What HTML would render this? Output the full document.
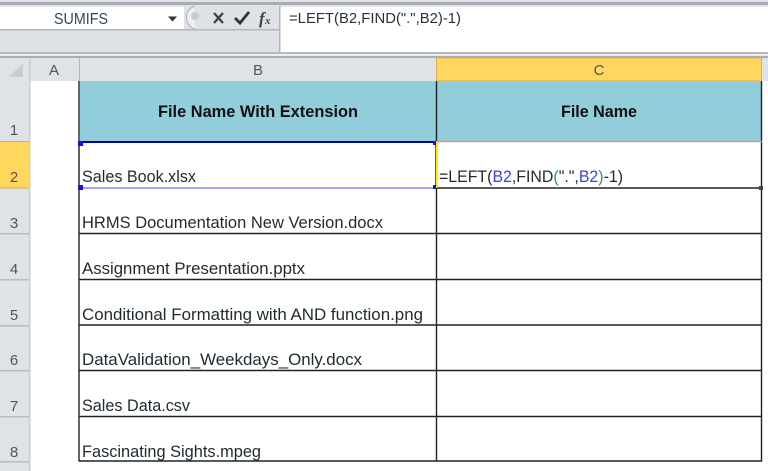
<!DOCTYPE html>
<html><head><meta charset="utf-8"><style>
html,body{margin:0;padding:0;background:#fff;width:768px;height:471px;overflow:hidden}
svg{display:block;font-family:"Liberation Sans",sans-serif;filter:blur(0.35px)}
.t{font-size:17px;fill:#1f2a30}
.h{font-size:16.500px;fill:#111;font-weight:bold}
.r{font-size:15px;fill:#555;text-anchor:middle}
</style></head><body>
<svg width="768" height="471" viewBox="0 0 768 471" xmlns="http://www.w3.org/2000/svg">
<!-- top -->
<rect width="768" height="57" fill="#fff"/>
<rect x="0" y="0" width="768" height="2" fill="#dfe2e6"/>
<rect x="0" y="2" width="768" height="3" fill="#a9adb2"/>
<rect x="0" y="5" width="768" height="2" fill="#e2e4e7"/>
<rect x="0" y="29" width="280" height="23" fill="#dee1e6"/>
<rect x="184" y="6" width="96" height="24" fill="#dee1e6"/>
<path d="M195 6 A12 12 0 0 0 195 29" fill="#eceef0" stroke="#b4b8bc" stroke-width="1.2"/>
<rect x="0" y="29" width="280" height="1.5" fill="#b4b8bd"/>
<rect x="279" y="6" width="1.5" height="46" fill="#b0b4b9"/>
<rect x="0" y="52" width="768" height="2" fill="#b4b8bc"/>
<rect x="0" y="54" width="768" height="3" fill="#eceef0"/>
<rect x="0" y="56" width="768" height="2" fill="#a9adb2"/>
<circle cx="195" cy="16" r="4" fill="#c9ccd0"/>
<path d="M168 16.5h9l-4.5 5z" fill="#333"/>
<text x="54" y="24" font-size="15.500" fill="#33475b" textLength="54" lengthAdjust="spacingAndGlyphs">SUMIFS</text>
<path d="M214 13l9 10M223 13l-9 10" stroke="#444" stroke-width="2.4" fill="none"/>
<path d="M235 18l5 5 9-11" stroke="#333" stroke-width="2.8" fill="none"/>
<text x="259" y="24" font-family="Liberation Serif,serif" font-style="italic" font-weight="bold" font-size="17" fill="#444">f</text>
<text x="265" y="24" font-family="Liberation Serif,serif" font-style="italic" font-weight="bold" font-size="11" fill="#444">x</text>
<text x="289" y="23" font-size="15" fill="#27323c" textLength="172" lengthAdjust="spacingAndGlyphs">=LEFT(B2,FIND(".",B2)-1)</text>

<!-- column headers -->
<rect x="0" y="58" width="768" height="23" fill="#dfe2e7"/>
<path d="M23 63v14h-14z" fill="#c9cdd1"/>
<rect x="29" y="58" width="1" height="23" fill="#b4b8bd"/>
<rect x="79" y="58" width="1" height="23" fill="#b4b8bd"/>
<rect x="436" y="58" width="326" height="23" fill="#ffd65e"/>
<rect x="436.5" y="58" width="325" height="23" fill="none" stroke="#e2ac4e"/>
<text x="54" y="75" font-size="15" fill="#555" text-anchor="middle">A</text>
<text x="258" y="75" font-size="15" fill="#555" text-anchor="middle">B</text>
<text x="599" y="75" font-size="15" fill="#555" text-anchor="middle">C</text>

<!-- row headers -->
<rect x="0" y="81" width="29" height="390" fill="#dfe2e7"/>
<rect x="29" y="58" width="1.5" height="413" fill="#c9ccd0"/>
<rect x="0" y="142" width="29" height="46" fill="#ffd65e"/>
<g fill="#b9bdc2">
<rect x="0" y="233" width="29" height="1.5"/>
<rect x="0" y="279" width="29" height="1.5"/>
<rect x="0" y="325" width="29" height="1.5"/>
<rect x="0" y="370" width="29" height="1.5"/>
<rect x="0" y="416" width="29" height="1.5"/>
<rect x="0" y="461" width="29" height="1.5"/>
</g>
<rect x="0" y="141" width="29" height="1" fill="#e2ac4e"/>
<rect x="0" y="187.500" width="29" height="1" fill="#e2ac4e"/>
<g class="r">
<text class="r" x="14" y="135">1</text>
<text class="r" x="14" y="182">2</text>
<text class="r" x="14" y="228">3</text>
<text class="r" x="14" y="274">4</text>
<text class="r" x="14" y="320">5</text>
<text class="r" x="14" y="365">6</text>
<text class="r" x="14" y="411">7</text>
<text class="r" x="14" y="457">8</text>
</g>

<!-- sheet -->
<rect x="80" y="81" width="682" height="60" fill="#92cddc"/>
<text class="h" x="158" y="117" textLength="200" lengthAdjust="spacingAndGlyphs">File Name With Extension</text>
<text class="h" x="561" y="117" textLength="76" lengthAdjust="spacingAndGlyphs">File Name</text>

<g stroke="#222" stroke-width="1.4" fill="none">
<path d="M79 81V461.500M436.500 81V461.500M761.500 81V461.500"/>
<path d="M79 233.500H762M79 279.500H762M79 325H762M79 370.500H762M79 416.500H762M79 461H762"/>
<path d="M436 188H762"/>
</g>
<path d="M437 141.500H762" stroke="#c09a96" stroke-width="1.6"/>
<path d="M79 142H436" stroke="#00009a" stroke-width="2"/>
<path d="M79.500 142V188M79 188H436" stroke="#4a4cf0" stroke-width="1"/>
<path d="M435.500 143V188" stroke="#2222dd" stroke-width="1"/>
<path d="M436.500 141V188" stroke="#f4e600" stroke-width="1.600"/>
<g fill="#1212e8">
<rect x="78" y="141" width="5" height="5"/>
<rect x="78" y="185" width="5" height="5"/>
<rect x="433" y="141" width="3" height="4"/>
<rect x="433" y="185" width="3" height="4"/>
</g>
<rect x="759" y="186" width="4" height="4" fill="#444"/>

<text class="t" x="82" y="182" textLength="114" lengthAdjust="spacingAndGlyphs">Sales Book.xlsx</text>
<text class="t" x="82" y="228" textLength="301" lengthAdjust="spacingAndGlyphs">HRMS Documentation New Version.docx</text>
<text class="t" x="82" y="274" textLength="223" lengthAdjust="spacingAndGlyphs">Assignment Presentation.pptx</text>
<text class="t" x="82" y="320" textLength="341" lengthAdjust="spacingAndGlyphs">Conditional Formatting with AND function.png</text>
<text class="t" x="82" y="365" textLength="280" lengthAdjust="spacingAndGlyphs">DataValidation_Weekdays_Only.docx</text>
<text class="t" x="82" y="411" textLength="108" lengthAdjust="spacingAndGlyphs">Sales Data.csv</text>
<text class="t" x="82" y="457" textLength="179" lengthAdjust="spacingAndGlyphs">Fascinating Sights.mpeg</text>

<text class="t" x="439" y="182" textLength="184" lengthAdjust="spacingAndGlyphs">=LEFT(<tspan fill="#4040e0">B2</tspan>,FIND<tspan fill="#2e9a5a">(</tspan>".",<tspan fill="#4040e0">B2</tspan><tspan fill="#2e9a5a">)</tspan>-1)</text>
</svg>
</body></html>
